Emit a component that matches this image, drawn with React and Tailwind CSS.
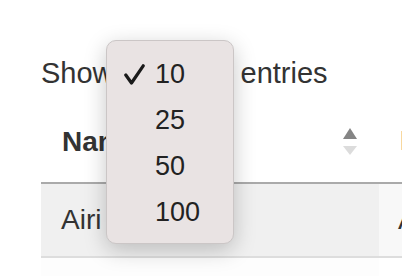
import React from 'react'

// Sort arrows in the header cell
function SortIcon() {
  return (
    <svg width="16" height="30" viewBox="0 0 16 30" className="shrink-0">
      <polygon points="1,12 8,1 15,12" fill="#858585" />
      <polygon points="1,19 15,19 8,28" fill="#dcdcdc" />
    </svg>
  )
}

function Check() {
  return (
    <svg width="21" height="21" viewBox="0 0 21 21" className="shrink-0">
      <path d="M1.8 11 L7.5 19 L19.2 1.8" fill="none" stroke="#1a1a1a" strokeWidth="3.2" strokeLinecap="round" strokeLinejoin="round" />
    </svg>
  )
}

const options = ['10', '25', '50', '100']

export default function App() {
  return (
    <div className="relative w-[402px] h-[276px] overflow-hidden bg-white text-[#333] font-['Liberation_Sans',Arial,sans-serif]">
      <div className="pl-[41px] pt-[57px]">
        {/* length control */}
        <div className="flex items-center h-[32px] text-[29px] leading-[32px]">
          <span>Show</span>
          <span className="w-[127px] shrink-0" />
          <span>entries</span>
        </div>

        {/* table */}
        <div className="mt-[11px] w-[420px]">
          <div className="flex h-[84px] border-b-2 border-[#aaaaaa] text-[28px] font-bold">
            <div className="w-[338px] shrink-0 flex items-center justify-between pl-[21px] pr-[21px] pt-[2px]">
              <span>Name</span>
              <SortIcon />
            </div>
            <div className="flex-1 flex items-center pl-[21px]">
              <span>Position</span>
            </div>
          </div>
          <div className="flex h-[74px] border-b-2 border-[#dddddd] text-[28px]">
            <div className="w-[338px] shrink-0 flex items-center pl-[20px] bg-[#f0f0f0]">Airi</div>
            <div className="flex-1 flex items-center pl-[19px] bg-[#f8f8f8]">Accountant</div>
          </div>
          <div className="flex h-[40px]">
            <div className="w-[338px] shrink-0 bg-[#fdfdfd]" />
            <div className="flex-1 bg-white" />
          </div>
        </div>
      </div>

      {/* native select popup */}
      <div className="absolute left-[106px] top-[40px] w-[128px] h-[204px] rounded-[10px] bg-[#e9e3e3] border border-[#cbc6c6] shadow-[0_6px_22px_rgba(0,0,0,0.22)] pt-[10px] text-[27px] text-[#222] font-['Liberation_Sans',Arial,sans-serif]">
        {options.map((o, i) => (
          <div key={o} className="flex items-center h-[46px]">
            <div className="w-[48px] flex justify-end pr-[10px]">
              {i === 0 && <Check />}
            </div>
            <span className="leading-none">{o}</span>
          </div>
        ))}
      </div>
    </div>
  )
}
